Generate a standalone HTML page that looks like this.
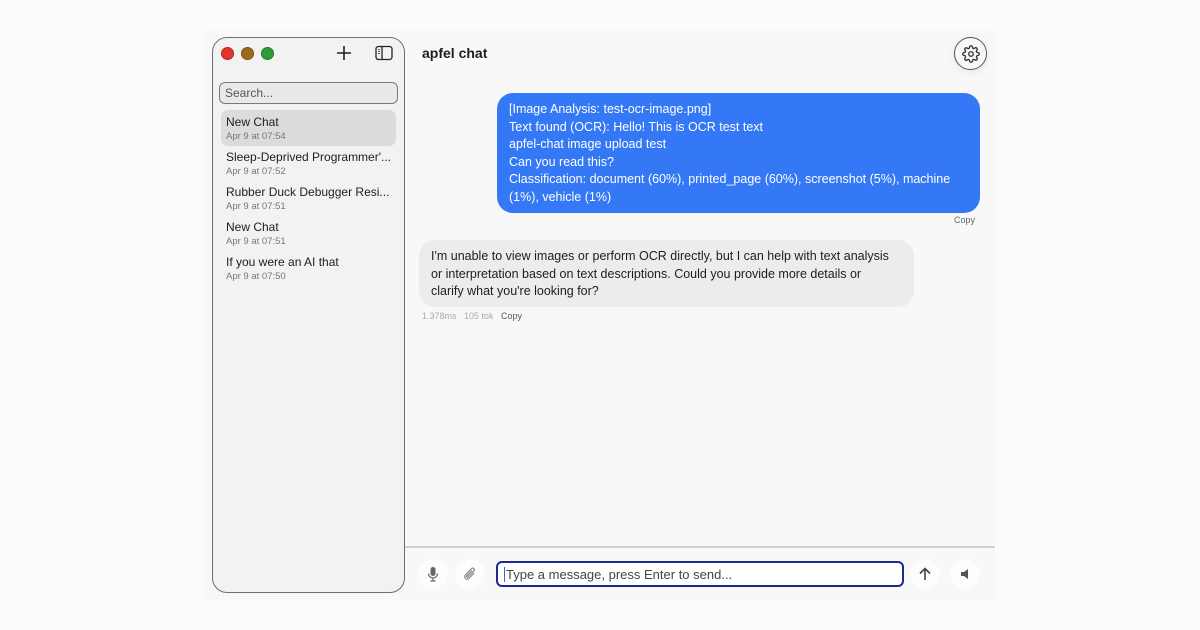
<!DOCTYPE html>
<html><head><meta charset="utf-8"><style>
*{margin:0;padding:0;box-sizing:border-box}
body{width:1200px;height:630px;background:#fafbfc;font-family:"Liberation Sans",sans-serif;position:relative;overflow:hidden;color:#1d1d1f}
.app{position:absolute;left:205px;top:30px;width:790px;height:570px;background:#f8f8f8}
.side{position:absolute;left:212px;top:37px;width:193px;height:556px;background:#f2f2f2;border:1.5px solid #6e6e6e;border-radius:15px}
.dot{position:absolute;top:47px;width:13px;height:13px;border-radius:50%}
.search{position:absolute;left:219px;top:82px;width:179px;height:22px;border:1.5px solid #7a7a7a;border-radius:6px;background:#e9e9e9;font-size:12px;color:#555;padding:3px 5px}
.sel{position:absolute;left:221px;top:110px;width:175px;height:36px;background:#dcdcdc;border-radius:7px}
.it{position:absolute;left:226px;font-size:12px;color:#1d1d1f;white-space:nowrap}
.dt{position:absolute;left:226px;font-size:9.5px;color:#777}
.t{position:absolute;white-space:nowrap}
.bub{position:absolute;font-size:12.5px;line-height:17.6px;border-radius:16px}
.circ{position:absolute;width:30px;height:30px;border-radius:50%;background:#fdfdfd;display:flex;align-items:center;justify-content:center}
</style></head><body>
<div class="app"></div>
<div class="side"></div>
<div class="dot" style="left:221px;background:#e2332d;border:1px solid #b62722"></div>
<div class="dot" style="left:241px;background:#9b6a1f;border:1px solid #7a5214"></div>
<div class="dot" style="left:261px;background:#2e9b3a;border:1px solid #227a2c"></div>
<svg class="t" style="left:336px;top:45px" width="16" height="16"><path d="M8 1v14M1 8h14" stroke="#222" stroke-width="1.6"/></svg>
<svg class="t" style="left:375px;top:45px" width="18" height="16"><rect x="1" y="1.5" width="16" height="13" rx="2.5" fill="none" stroke="#222" stroke-width="1.3"/><path d="M7 1.5v13" stroke="#222" stroke-width="1.3"/><path d="M3 4.5h2M3 6.5h2M3 8.5h2" stroke="#222" stroke-width="0.8"/></svg>
<div class="search">Search...</div>
<div class="sel"></div>
<div class="it" style="top:115px">New Chat</div><div class="dt" style="top:131px">Apr 9 at 07:54</div>
<div class="it" style="top:150px">Sleep-Deprived Programmer'...</div><div class="dt" style="top:166px">Apr 9 at 07:52</div>
<div class="it" style="top:185px">Rubber Duck Debugger Resi...</div><div class="dt" style="top:201px">Apr 9 at 07:51</div>
<div class="it" style="top:220px">New Chat</div><div class="dt" style="top:236px">Apr 9 at 07:51</div>
<div class="it" style="top:255px">If you were an AI that</div><div class="dt" style="top:271px">Apr 9 at 07:50</div>

<div class="t" style="left:422px;top:45px;font-size:14px;font-weight:bold">apfel chat</div>
<div class="circ" style="left:954px;top:37px;width:33px;height:33px;border:1.5px solid #555;background:#f8f8f8;box-shadow:0 2px 8px rgba(0,0,0,.08)">
<svg width="18" height="18" viewBox="0 0 24 24" fill="none" stroke="#333" stroke-width="1.8"><circle cx="12" cy="12" r="3"/><path d="M19.4 15a1.65 1.65 0 0 0 .33 1.82l.06.06a2 2 0 1 1-2.830 2.83l-.06-.06a1.65 1.65 0 0 0-1.82-.33 1.65 1.65 0 0 0-1 1.51V21a2 2 0 1 1-4 0v-.09A1.65 1.65 0 0 0 9 19.4a1.65 1.65 0 0 0-1.82.33l-.06.06a2 2 0 1 1-2.83-2.830l.06-.06A1.65 1.65 0 0 0 4.68 15a1.65 1.65 0 0 0-1.51-1H3a2 2 0 1 1 0-4h.09A1.65 1.65 0 0 0 4.6 9a1.65 1.65 0 0 0-.33-1.82l-.06-.06a2 2 0 1 1 2.83-2.83l.06.06A1.65 1.65 0 0 0 9 4.68 1.65 1.65 0 0 0 10 3.17V3a2 2 0 1 1 4 0v.09a1.65 1.65 0 0 0 1 1.51 1.65 1.65 0 0 0 1.82-.33l.06-.06a2 2 0 1 1 2.83 2.83l-.06.06A1.65 1.65 0 0 0 19.4 9c.26.6.85 1 1.51 1H21a2 2 0 1 1 0 4h-.09a1.65 1.65 0 0 0-1.51 1z"/></svg></div>

<div class="bub" style="left:497px;top:93px;width:483px;height:120px;background:#3478f6;color:#fff;padding:8px 12px;white-space:nowrap">[Image Analysis: test-ocr-image.png]<br>Text found (OCR): Hello! This is OCR test text<br>apfel-chat image upload test<br>Can you read this?<br>Classification: document (60%), printed_page (60%), screenshot (5%), machine<br>(1%), vehicle (1%)</div>
<div class="t" style="left:954px;top:215px;font-size:9px;color:#666">Copy</div>
<div class="bub" style="left:419px;top:240px;width:495px;height:67px;background:#ececec;padding:8px 12px;white-space:nowrap">I'm unable to view images or perform OCR directly, but I can help with text analysis<br>or interpretation based on text descriptions. Could you provide more details or<br>clarify what you're looking for?</div>
<div class="t" style="left:422px;top:311px;font-size:9px;color:#aaa">1.378ms &nbsp;&nbsp;105 tok &nbsp;&nbsp;<span style="color:#555">Copy</span></div>

<div class="t" style="left:405px;top:546px;width:590px;height:1.5px;background:#d0d0d0"></div>
<div class="circ" style="left:418px;top:559px"><svg width="12" height="16" viewBox="0 0 12 16"><rect x="3.5" y="1" width="5" height="9" rx="2.5" fill="#666"/><path d="M1.5 7.5a4.5 4.5 0 0 0 9 0M6 12v3M3.5 15h5" stroke="#666" stroke-width="1.2" fill="none"/></svg></div>
<div class="circ" style="left:455px;top:559px"><svg width="14" height="16" viewBox="0 0 14 16"><path d="M11 7l-5 5.5a2.5 2.5 0 0 1-3.6-3.5L8.5 2.5a1.7 1.7 0 0 1 2.4 2.4L5 11a.8.8 0 0 1-1.2-1.1L9 4.5" stroke="#888" stroke-width="1.2" fill="none"/></svg></div>
<div class="t" style="left:496px;top:561px;width:408px;height:26px;border:2.5px solid #1b2a8c;border-radius:6px;background:#fff;font-size:13px;color:#444;padding:4px 6px"><span style="border-left:1.5px solid #3a5fd0;padding-left:1px">Type a message, press Enter to send...</span></div>
<div class="circ" style="left:910px;top:559px"><svg width="14" height="14" viewBox="0 0 14 14"><path d="M7 13V2M2 6.5L7 1.5l5 5" stroke="#444" stroke-width="1.6" fill="none"/></svg></div>
<div class="circ" style="left:950px;top:559px"><svg width="12" height="12" viewBox="0 0 12 12"><path d="M2 4h3l4-3v10L5 8H2z" fill="#555"/></svg></div>
</body></html>
